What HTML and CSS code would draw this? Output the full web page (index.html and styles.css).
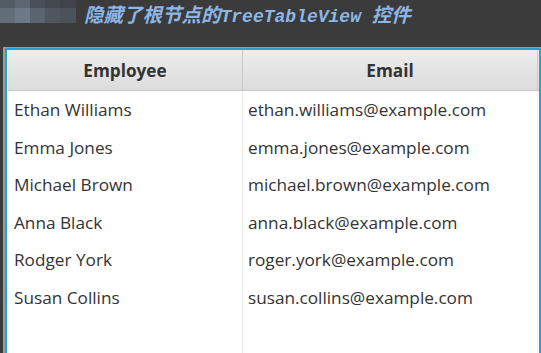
FILE: index.html
```html
<!DOCTYPE html>
<html>
<head>
<meta charset="utf-8">
<link rel="stylesheet" href="styles.css">
</head>
<body>
<div class="top">
  <div class="mosaic">
    <span class="m a"></span><span class="m b"></span><span class="m c"></span><span class="m d"></span><span class="m e"></span>
    <span class="m f"></span><span class="m g"></span><span class="m h"></span><span class="m i"></span><span class="m j"></span>
  </div>
  <div class="title"><span class="cn">隐藏了根节点的</span><span class="mono">TreeTableView </span><span class="cn">控件</span></div>
</div>
<div class="frame">
  <div class="table">
    <div class="head">
      <div class="hc c1">Employee</div>
      <div class="hc c2">Email</div>
    </div>
    <div class="body">
      <div class="col c1">
        <div class="cell">Ethan Williams</div>
        <div class="cell">Emma Jones</div>
        <div class="cell">Michael Brown</div>
        <div class="cell">Anna Black</div>
        <div class="cell">Rodger York</div>
        <div class="cell">Susan Collins</div>
      </div>
      <div class="col c2">
        <div class="cell">ethan.williams@example.com</div>
        <div class="cell">emma.jones@example.com</div>
        <div class="cell">michael.brown@example.com</div>
        <div class="cell">anna.black@example.com</div>
        <div class="cell">roger.york@example.com</div>
        <div class="cell">susan.collins@example.com</div>
      </div>
    </div>
  </div>
</div>
</body>
</html>
```
FILE: styles.css
```css
html, body {
  margin: 0;
  padding: 0;
}
body {
  width: 541px;
  height: 353px;
  overflow: hidden;
  background: #3b3b3b;
}
.top {
  height: 47px;
  display: flex;
  align-items: flex-start;
}
.mosaic {
  display: grid;
  grid-template-columns: 15px 15px 15px 15px 16px;
  grid-template-rows: 8px 15px;
  width: 76px;
  flex: none;
}
.m { display: block; }
.a { background: #535b64; }
.b { background: #5d6670; }
.c { background: #4a5057; }
.d { background: #44494f; }
.e { background: #40444a; }
.f { background: #626e7a; }
.g { background: #6c7986; }
.h { background: #5a646f; }
.i { background: #4f565e; }
.j { background: #4c525a; }
.title {
  margin-left: 8px;
  padding-top: 5px;
  color: #8db6e6;
  line-height: 18px;
  font-weight: bold;
  font-style: italic;
  white-space: nowrap;
}
.cn {
  font-family: "Noto Sans CJK SC", sans-serif;
  font-size: 19.5px;
}
.mono {
  font-family: "Liberation Mono", monospace;
  font-size: 18px;
}
.frame {
  margin-left: 3px;
  width: 540px;
  border-top: 1px solid #9d9d9d;
  border-left: 2px solid #9d9d9d;
  background: #9d9d9d;
}
.table {
  box-sizing: border-box;
  width: 536px;
  height: 305px;
  border: 2px solid #22a0d8;
  border-bottom: none;
  background: #ffffff;
  font-family: "Open Sans", sans-serif;
  font-size: 17.2px;
  color: #333333;
  overflow: hidden;
}
.head {
  display: flex;
  height: 40px;
  border-bottom: 1px solid #c6c6c6;
  background: linear-gradient(#ededed, #dcdcdc);
  margin-left: 1px;
}
.hc {
  display: flex;
  align-items: center;
  justify-content: center;
  font-weight: bold;
  border-right: 1px solid #c9c9c9;
}
.c1 { width: 234px; }
.c2 { width: 294px; }
.body {
  display: flex;
  height: 264px;
  margin-left: 1px;
}
.col {
  border-right: 1px solid #ececec;
}
.cell {
  height: 37.5px;
  line-height: 37.5px;
  padding-left: 6px;
  white-space: nowrap;
}
.c2 .cell {
  padding-left: 5px;
}
```
